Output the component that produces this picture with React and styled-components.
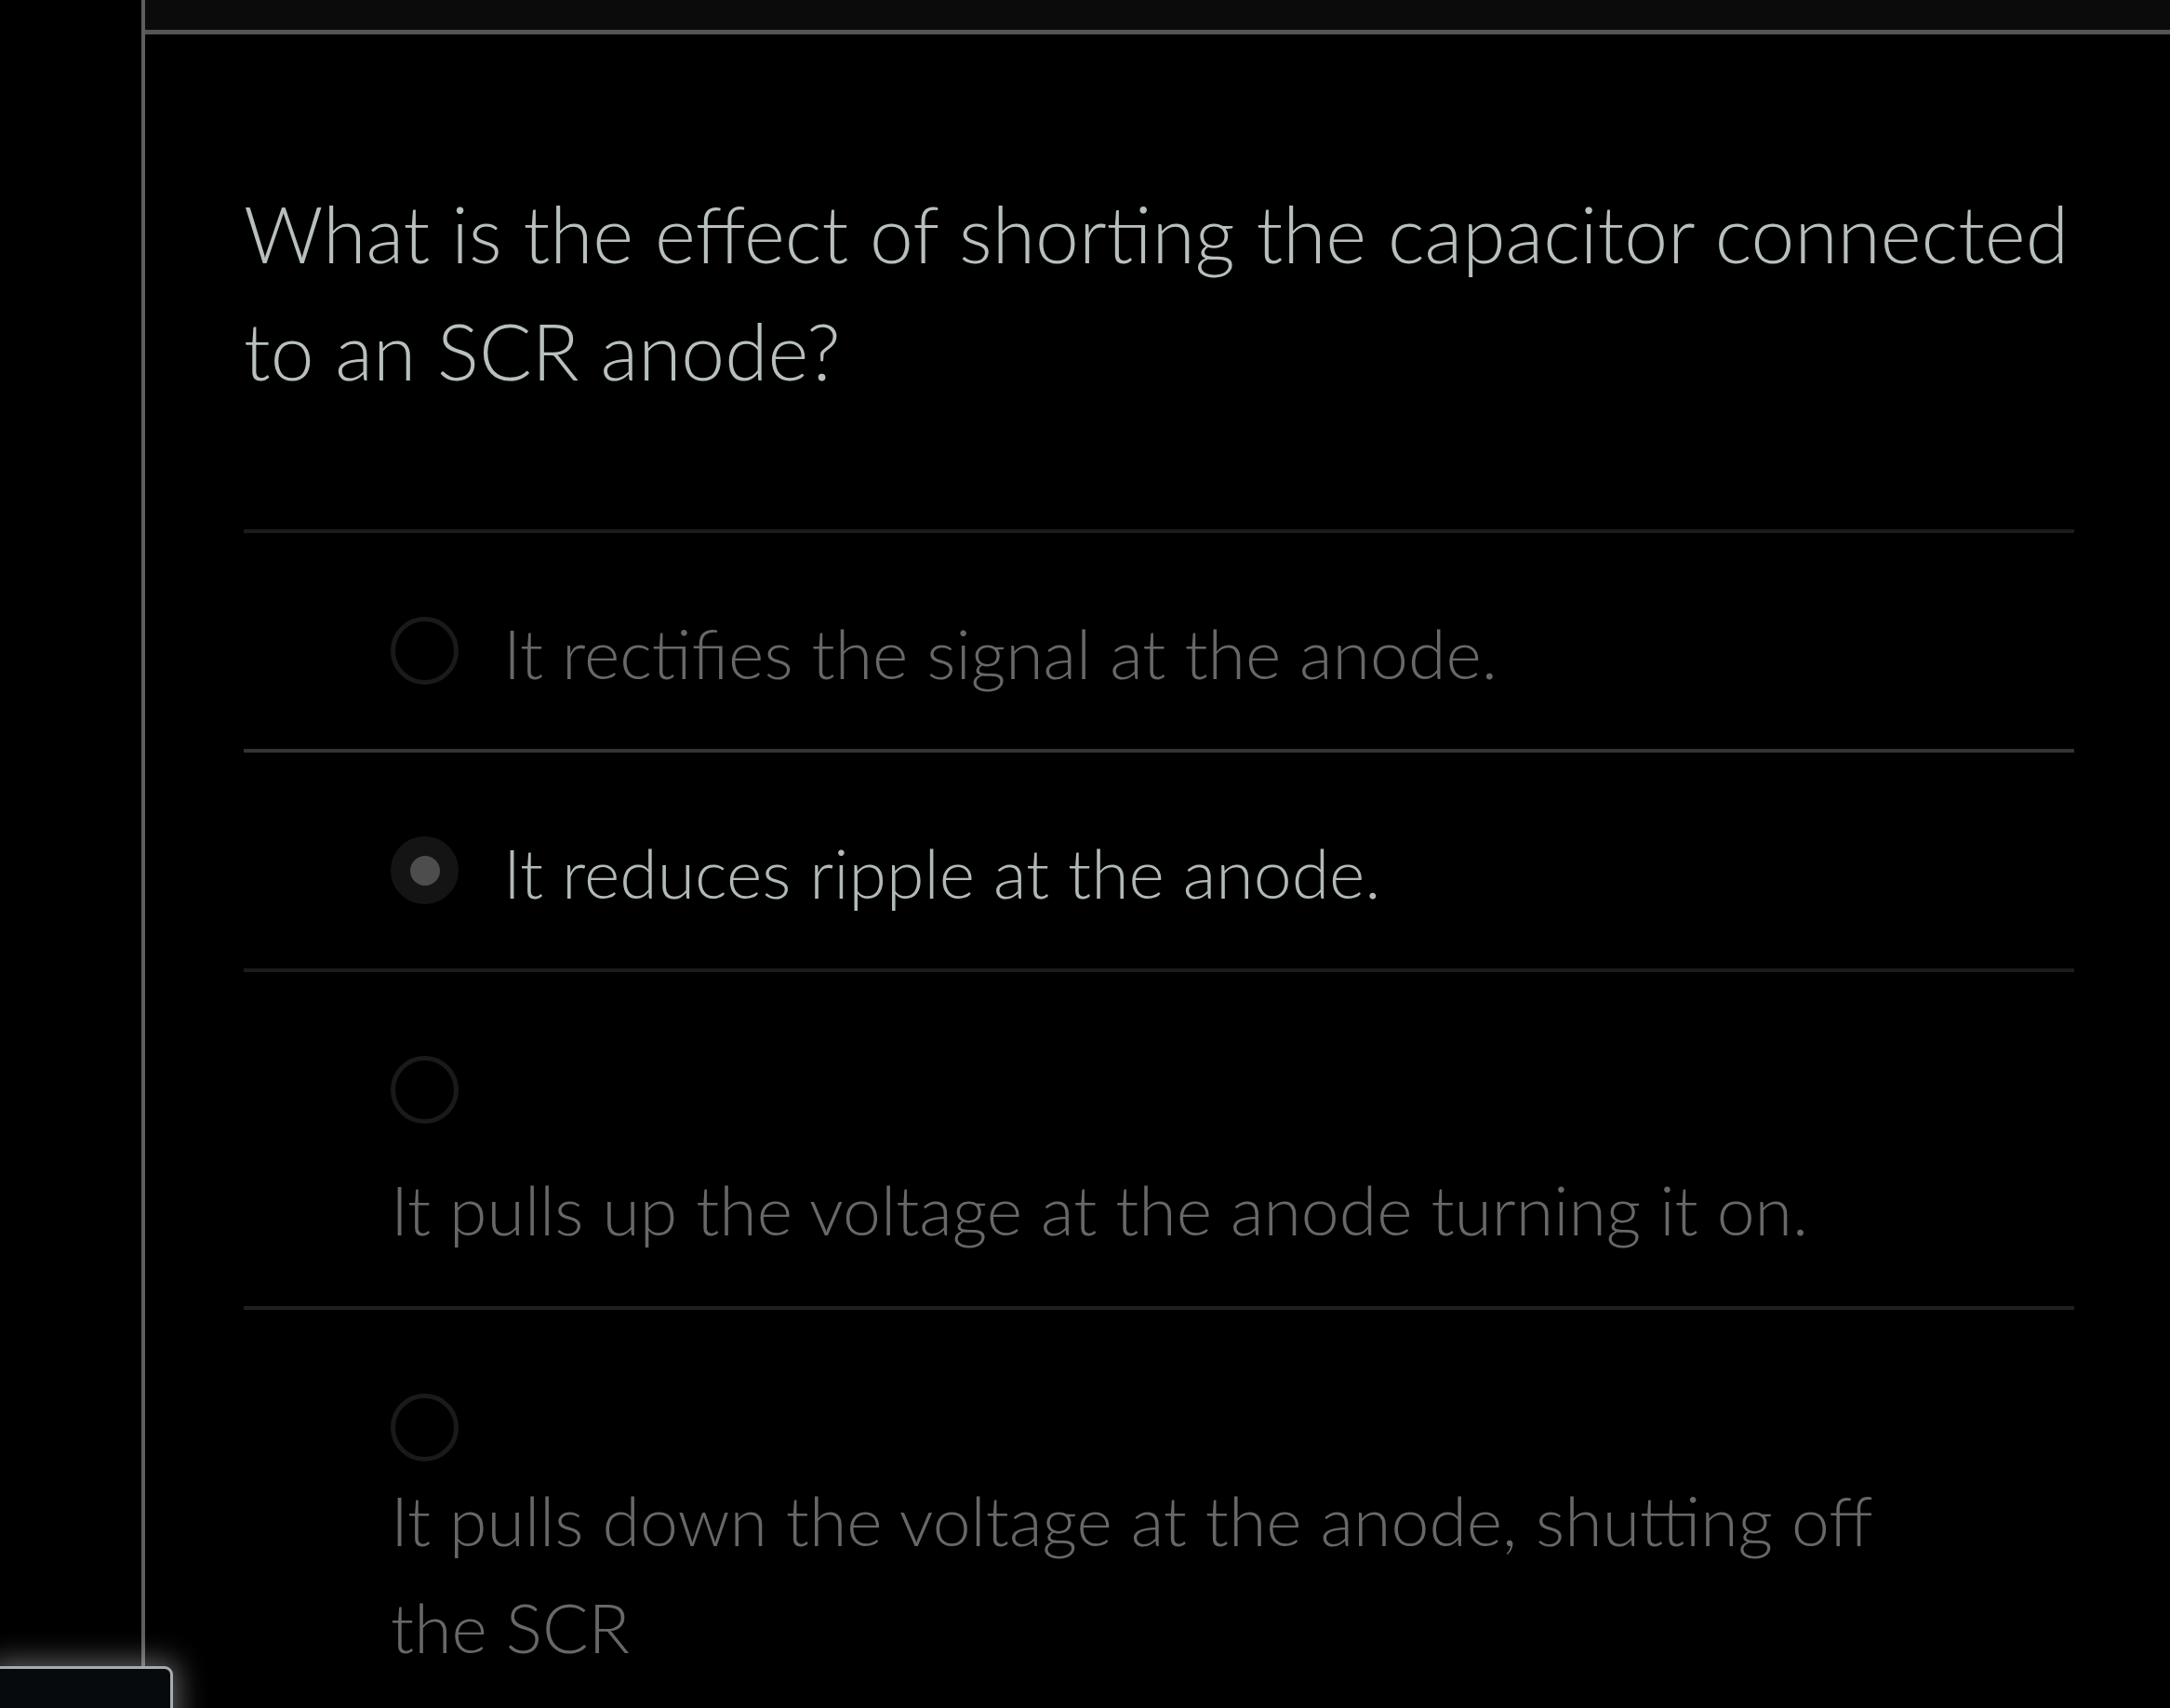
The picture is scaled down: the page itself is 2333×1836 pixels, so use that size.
import React from 'react';
import styled, {createGlobalStyle} from 'styled-components';

const GlobalStyle = createGlobalStyle`
    html, body {
        margin: 0;
        padding: 0;
        background: #000;
    }
    body {
        font-family: Lato, "Open Sans", sans-serif;
        overflow: hidden;
    }
`;

const Screen = styled.div`
    display: flex;
    width: 2333px;
    height: 1836px;
    background: #000;
    position: relative;
    overflow: hidden;
`;

const Sidebar = styled.div`
    width: 152px;
    flex-shrink: 0;
    background: #000;
    border-right: 4px solid #5e5e5e;
`;

const Main = styled.div`
    flex: 1;
    display: flex;
    flex-direction: column;
    min-height: 0;
`;

const TopBar = styled.div`
    height: 32px;
    flex-shrink: 0;
    background: #0b0b0b;
    border-bottom: 5px solid #555;
`;

const Content = styled.div`
    flex-shrink: 0;
    padding: 151px 0 0 106px;
    width: 1968px;
`;

const Question = styled.h2`
    margin: 0 0 129px;
    font-family: Lato, sans-serif;
    font-weight: 300;
    font-size: 84px;
    line-height: 126px;
    color: #b8bfbf;
    white-space: nowrap;
`;

const Options = styled.div`
    display: flex;
    flex-direction: column;
`;

const Option = styled.label`
    display: flex;
    flex-direction: ${p => (p.stacked ? 'column' : 'row')};
    align-items: flex-start;
    gap: ${p => (p.stacked ? '0' : '48px')};
    padding: ${p => (p.stacked ? '90px 0 46px 158px' : '72px 0 45px 158px')};
    border-top: 4px solid ${p => p.lineColor || '#1b1b1b'};
    cursor: pointer;
`;

const Radio = styled.span`
    width: 73px;
    height: 73px;
    box-sizing: border-box;
    border-radius: 50%;
    flex-shrink: 0;
    margin-top: ${p => (p.stacked ? '0' : '18px')};
    border: 5px solid ${p => (p.checked ? '#141414' : '#1a1a1a')};
    background: ${p => (p.checked ? '#141414' : 'transparent')};
    display: flex;
    align-items: center;
    justify-content: center;

    &::after {
        content: '';
        display: ${p => (p.checked ? 'block' : 'none')};
        width: 32px;
        height: 32px;
        border-radius: 50%;
        background: #4d4d4d;
    }
`;

const OptionText = styled.span`
    display: block;
    margin-top: ${p => p.offset || 0}px;
    font-family: Lato, sans-serif;
    font-weight: 300;
    font-size: 73.4px;
    line-height: 115px;
    color: ${p => (p.checked ? '#b2b9b9' : '#686868')};
    max-width: 1640px;
`;

const Dock = styled.div`
    position: absolute;
    left: -4px;
    top: 1791px;
    width: 190px;
    height: 80px;
    box-sizing: border-box;
    background: #070a0d;
    border: 3px solid #a6abaf;
    border-radius: 0 9px 0 0;
    box-shadow: 0 0 30px 6px rgba(255, 255, 255, 0.36);
`;

const answers = [
    {text: 'It rectifies the signal at the anode.', line: '#1c1c1c'},
    {text: 'It reduces ripple at the anode.', checked: true, line: '#343434'},
    {text: 'It pulls up the voltage at the anode turning it on.', stacked: true, offset: 35, line: '#1c1c1c'},
    {text: 'It pulls down the voltage at the anode, shutting off the SCR', stacked: true, offset: 6, line: '#202020'},
];

export default function App() {
    return (
        <>
            <GlobalStyle/>
            <Screen>
                <Sidebar/>
                <Main>
                    <TopBar/>
                    <Content>
                        <Question>
                            What is the effect of shorting the capacitor connected<br/>
                            to an SCR anode?
                        </Question>
                        <Options>
                            {answers.map(a => (
                                <Option key={a.text} stacked={a.stacked} lineColor={a.line}>
                                    <Radio checked={a.checked} stacked={a.stacked}/>
                                    <OptionText checked={a.checked} offset={a.offset}>{a.text}</OptionText>
                                </Option>
                            ))}
                        </Options>
                    </Content>
                </Main>
                <Dock/>
            </Screen>
        </>
    );
}
